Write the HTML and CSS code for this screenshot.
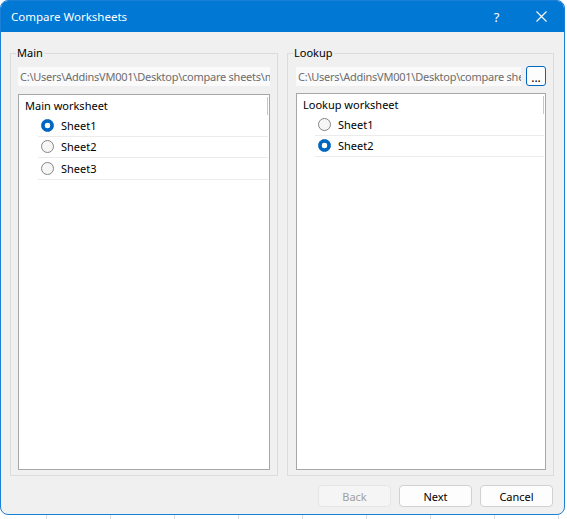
FILE: index.html
```html
<!DOCTYPE html>
<html lang="en">
<head>
    <meta charset="UTF-8">
    <title>Compare Worksheets</title>
    <link rel="stylesheet" href="styles.css">
</head>
<body>
    <div class="window">
        <div class="titlebar">
            <span class="title">Compare Worksheets</span>
            <div class="title-buttons">
                <span class="title-btn">?</span>
                <span class="title-btn">
                    <svg width="11" height="11" viewBox="0 0 11 11">
                        <path d="M0.5 0.5L10.5 10.5M10.5 0.5L0.5 10.5" stroke="#fff" stroke-width="1.1" fill="none"/>
                    </svg>
                </span>
            </div>
        </div>

        <div class="content">
            <div class="groups">
                <fieldset class="group">
                    <legend>Main</legend>
                    <div class="path-row">
                        <div class="path">C:\Users\AddinsVM001\Desktop\compare sheets\main.xlsx</div>
                    </div>
                    <div class="sheet-list">
                        <div class="list-header">Main worksheet</div>
                        <div class="sheet-row"><span class="radio checked"></span>Sheet1</div>
                        <div class="sheet-row"><span class="radio"></span>Sheet2</div>
                        <div class="sheet-row"><span class="radio"></span>Sheet3</div>
                    </div>
                </fieldset>

                <fieldset class="group group-lookup">
                    <legend>Lookup</legend>
                    <div class="path-row">
                        <div class="path">C:\Users\AddinsVM001\Desktop\compare sheets\lookup.xlsx</div>
                        <button class="browse">...</button>
                    </div>
                    <div class="sheet-list">
                        <div class="list-header">Lookup worksheet</div>
                        <div class="sheet-row"><span class="radio"></span>Sheet1</div>
                        <div class="sheet-row"><span class="radio checked"></span>Sheet2</div>
                    </div>
                </fieldset>
            </div>

            <div class="footer">
                <button class="btn" disabled>Back</button>
                <button class="btn">Next</button>
                <button class="btn">Cancel</button>
            </div>
        </div>
    </div>
</body>
</html>
```

FILE: styles.css
```css
* {
    margin: 0;
    padding: 0;
    box-sizing: border-box;
}

html {
    background-color: #fff;
    background-image: linear-gradient(90deg, #dadada 1px, transparent 1px);
    background-size: 64px 100%;
    background-position: 46px 0;
}

body {
    margin: 0;
    font-family: 'Segoe UI', 'Noto Sans', sans-serif;
    font-size: 11px;
    color: #000;
}

.window {
    width: 565px;
    height: 515px;
    display: flex;
    flex-direction: column;
    background: #f0f0f0;
    border: 1px solid #1a7fd6;
    border-radius: 8px;
    overflow: hidden;
}

.titlebar {
    height: 31px;
    flex-shrink: 0;
    display: flex;
    align-items: center;
    justify-content: space-between;
    background: #0078d4;
    color: #fff;
    padding-left: 10px;
    font-size: 11.5px;
}

.title-buttons {
    display: flex;
    height: 100%;
}

.title-btn {
    width: 45px;
    display: flex;
    align-items: center;
    justify-content: center;
    font-size: 13px;
}

.content {
    flex: 1;
    display: flex;
    flex-direction: column;
    padding: 14px 10px 7px 9px;
}

.groups {
    flex: 1;
    display: grid;
    grid-template-columns: 268px 267px;
    gap: 9px;
}

.group {
    min-width: 0;
    display: flex;
    flex-direction: column;
    border: 1px solid #dcdcdc;
    padding: 7px 7px 5px 7px;
}

.group legend {
    padding: 0 1px;
    margin-left: -2px;
    line-height: 14px;
}

.path-row {
    display: flex;
    gap: 5px;
    height: 19px;
}

.path {
    flex: 1;
    min-width: 0;
    background: #fafafa;
    color: #6d6d6d;
    padding-left: 2px;
    line-height: 19px;
    letter-spacing: -0.25px;
    white-space: nowrap;
    overflow: hidden;
}

.group-lookup .path-row {
    padding-left: 1px;
}

.browse {
    width: 20px;
    height: 20px;
    margin-top: -1px;
    padding: 4px 0 0;
    border: 1px solid #0067c0;
    border-radius: 3px;
    background: #fdfdfd;
    font-family: inherit;
    font-size: 12px;
    line-height: 12px;
    color: #000;
}

.sheet-list {
    flex: 1;
    margin-top: 8px;
    background: #fff;
    border: 1px solid #a7a7a7;
    position: relative;
}

.group-lookup .sheet-list {
    margin-top: 7px;
    margin-left: 1px;
}

.sheet-list::after {
    content: '';
    position: absolute;
    top: 2px;
    right: 1px;
    width: 1px;
    height: 18px;
    background: #c8c8c8;
}

.list-header {
    height: 20px;
    line-height: 20px;
    padding: 1px 0 0 6px;
}

.sheet-row {
    height: 21.6px;
    margin-left: 19px;
    margin-right: 1px;
    display: flex;
    align-items: center;
    gap: 7px;
    padding-left: 3px;
    border-bottom: 1px solid #ebebeb;
}

.group-lookup .sheet-row {
    margin-left: 18px;
}

.radio {
    width: 13px;
    height: 13px;
    border-radius: 50%;
    border: 1px solid #858585;
    background: #f6f6f6;
    flex-shrink: 0;
}

.radio.checked {
    border-color: #0067c0;
    background: radial-gradient(circle, #fff 0 2.6px, #0067c0 3.1px);
}

.footer {
    display: flex;
    justify-content: flex-end;
    gap: 8px;
    margin-top: 9px;
    padding-right: 1px;
}

.btn {
    width: 73px;
    height: 22px;
    border: 1px solid #d0d0d0;
    border-radius: 4px;
    background: #fdfdfd;
    font-family: inherit;
    font-size: 11px;
    color: #000;
}

.btn:disabled {
    background: #f5f5f5;
    border-color: #e5e5e5;
    color: #a0a0a0;
}
```
